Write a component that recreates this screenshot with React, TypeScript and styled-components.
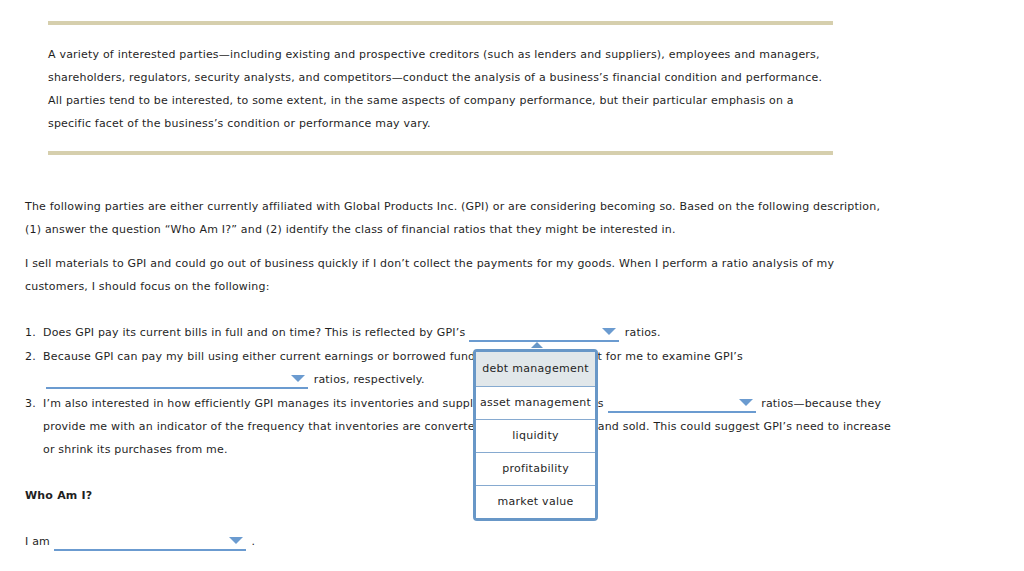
import styled, { createGlobalStyle } from 'styled-components'

const GlobalStyle = createGlobalStyle`
  html, body {
    margin: 0;
    padding: 0;
    background: #ffffff;
  }
  body {
    font-family: Verdana, "DejaVu Sans", sans-serif;
    font-size: 11px;
    letter-spacing: 0.2px;
    color: #1f1f1f;
  }
`

const Blue = '#6b9bd0'

function Dropdown({ width, open, indent }: { width: number; open?: boolean; indent?: number }) {
  return (
    <Select $width={width} $indent={indent || 0}>
      <Arrow />
      {open && (
        <Popup>
          <Caret />
          <Option $active>debt management</Option>
          <Option>asset management</Option>
          <Option>liquidity</Option>
          <Option>profitability</Option>
          <Option>market value</Option>
        </Popup>
      )}
    </Select>
  )
}

export default function App() {
  return (
    <Page>
      <GlobalStyle />
      <IntroBox>
        A variety of interested parties—including existing and prospective creditors (such as lenders and suppliers), employees and managers,
        <br />
        shareholders, regulators, security analysts, and competitors—conduct the analysis of a business’s financial condition and performance.
        <br />
        All parties tend to be interested, to some extent, in the same aspects of company performance, but their particular emphasis on a
        <br />
        specific facet of the business’s condition or performance may vary.
      </IntroBox>

      <Para $top={40}>
        The following parties are either currently affiliated with Global Products Inc. (GPI) or are considering becoming so. Based on the following description,
        <br />
        (1) answer the question “Who Am I?” and (2) identify the class of financial ratios that they might be interested in.
      </Para>

      <Para $top={11}>
        I sell materials to GPI and could go out of business quickly if I don’t collect the payments for my goods. When I perform a ratio analysis of my
        <br />
        customers, I should focus on the following:
      </Para>

      <List>
        <Item>
          <Num>1.</Num>
          <ItemText>
            Does GPI pay its current bills in full and on time? This is reflected by GPI’s <Dropdown width={150} open /> ratios.
          </ItemText>
        </Item>
        <Item>
          <Num>2.</Num>
          <ItemText>
            Because GPI can pay my bill using either current earnings or borrowed funds, it is more important for me to examine GPI’s
            <br />
            <Dropdown width={262} indent={3} /> ratios, respectively.
          </ItemText>
        </Item>
        <Item>
          <Num>3.</Num>
          <ItemText>
            I’m also interested in how efficiently GPI manages its inventories and suppliers, as reflected by its <Dropdown width={148} /> ratios—because they
            <br />
            provide me with an indicator of the frequency that inventories are converted into finished goods and sold. This could suggest GPI’s need to increase
            <br />
            or shrink its purchases from me.
          </ItemText>
        </Item>
      </List>

      <Heading>Who Am I?</Heading>

      <Para $top={23}>
        I am <Dropdown width={192} /> .
      </Para>
    </Page>
  )
}

const Page = styled.div`
  padding: 21px 25px 20px 25px;
  line-height: 23px;
  white-space: nowrap;
`

const IntroBox = styled.div`
  margin-left: 23px;
  width: 785px;
  border-top: 4px solid #d6cfad;
  border-bottom: 4px solid #d6cfad;
  padding: 18px 0 16px 0;
`

const Para = styled.p<{ $top: number }>`
  margin: ${p => p.$top}px 0 0 0;
`

const List = styled.div`
  margin-top: 23px;
  display: flex;
  flex-direction: column;
  gap: 1px;
`

const Item = styled.div`
  display: flex;
`

const Num = styled.span`
  width: 18px;
  flex-shrink: 0;
`

const ItemText = styled.span`
  display: block;
`

const Heading = styled.p`
  margin: 23px 0 0 0;
  font-weight: bold;
`

const Select = styled.span<{ $width: number; $indent: number }>`
  position: relative;
  display: inline-block;
  vertical-align: -6px;
  width: ${p => p.$width}px;
  height: 17px;
  border-bottom: 2px solid ${Blue};
  margin: 0 2px 0 ${p => p.$indent}px;
`

const Arrow = styled.span`
  position: absolute;
  right: 3px;
  top: 5px;
  width: 0;
  height: 0;
  border-left: 7px solid transparent;
  border-right: 7px solid transparent;
  border-top: 7px solid ${Blue};
`

const Popup = styled.div`
  position: absolute;
  left: 4px;
  top: calc(100% + 9px);
  width: 119px;
  border: 3px solid #6897c7;
  border-radius: 4px;
  background: #ffffff;
  z-index: 5;
  display: flex;
  flex-direction: column;
`

const Caret = styled.span`
  position: absolute;
  left: 55px;
  top: -10px;
  width: 0;
  height: 0;
  border-left: 6px solid transparent;
  border-right: 6px solid transparent;
  border-bottom: 6px solid #6897c7;
`

const Option = styled.div<{ $active?: boolean }>`
  height: 32px;
  line-height: 32px;
  text-align: center;
  background: ${p => (p.$active ? '#e1e7ea' : '#ffffff')};
  border-top: 1px solid #86aad0;
  color: #1f1f1f;
  letter-spacing: 0.3px;
  &:first-of-type {
    height: 34px;
    line-height: 34px;
    border-top: none;
  }
`
